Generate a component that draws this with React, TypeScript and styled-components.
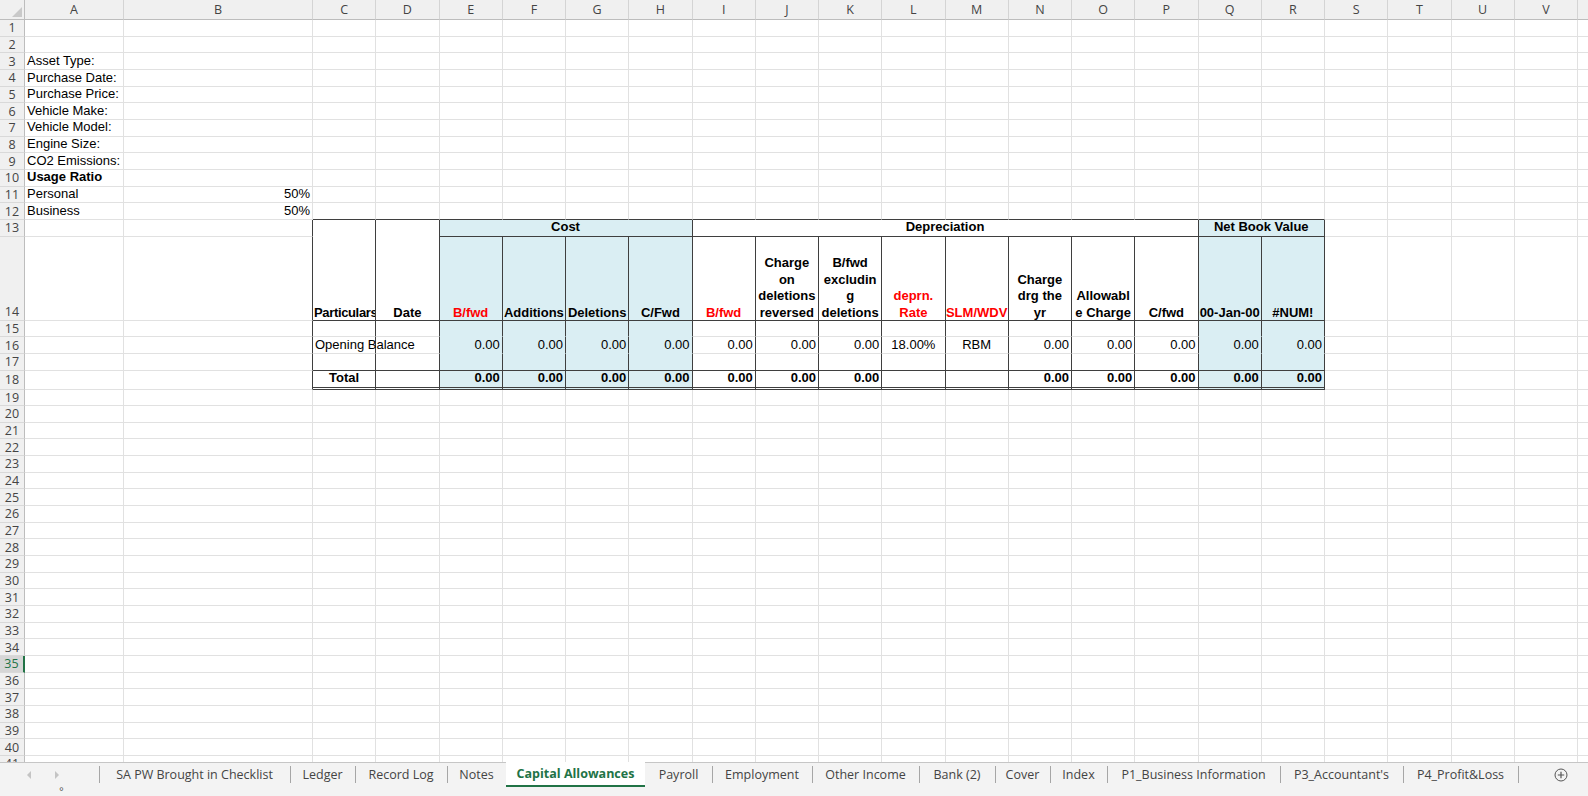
import * as React from "react";
import styled, { createGlobalStyle, css } from "styled-components";

const GlobalStyle = createGlobalStyle`
  html, body {
    margin: 0;
    padding: 0;
    background: #ffffff;
    overflow: hidden;
  }
  #root {
    width: 1588px;
    height: 796px;
  }
`;

type Edge = "grid" | "dark" | "double" | "none";
type Align = "left" | "center" | "right";

interface CellDef {
  text?: React.ReactNode;
  colSpan?: number;
  rowSpan?: number;
  bold?: boolean;
  red?: boolean;
  align?: Align;
  bottomAlign?: boolean;
  fill?: boolean;
  clip?: boolean;
  tight?: boolean;
  right?: Edge;
  bottom?: Edge;
}

const LETTERS = "ABCDEFGHIJKLMNOPQRSTUV".split("").concat([""]);
const ROWS = 41;
const SELECTED_ROW = 35;

// table occupies columns C..R (index 2..17), rows 13..18
const T_FIRST = 2;
const T_LAST = 17;
const FILL_COLS = [4, 5, 6, 7, 16, 17];

const rowHeight = (r: number) => (r === 14 ? 84 : r === 18 ? 19 : 16.67);

const br = (...lines: string[]) =>
  lines.map((l, i) => (
    <React.Fragment key={i}>
      {i > 0 && <br />}
      {l}
    </React.Fragment>
  ));

const labels: Record<number, string> = {
  3: "Asset Type:",
  4: "Purchase Date:",
  5: "Purchase Price:",
  6: "Vehicle Make:",
  7: "Vehicle Model:",
  8: "Engine Size:",
  9: "CO2 Emissions:",
  10: "Usage Ratio",
  11: "Personal",
  12: "Business",
};

const headings: CellDef[] = [
  { text: "B/fwd", red: true },
  { text: "Additions" },
  { text: "Deletions" },
  { text: "C/Fwd" },
  { text: "B/fwd", red: true },
  { text: br("Charge", "on", "deletions", "reversed") },
  { text: br("B/fwd", "excludin", "g", "deletions") },
  { text: br("deprn.", "Rate"), red: true },
  { text: "SLM/WDV", red: true },
  { text: br("Charge", "drg the", "yr") },
  { text: br("Allowabl", "e Charge") },
  { text: "C/fwd" },
  { text: "00-Jan-00" },
  { text: "#NUM!" },
];

const inTable = (c: number) => c >= T_FIRST && c <= T_LAST;

function defaultEdges(r: number, c: number): { right: Edge; bottom: Edge; fill: boolean } {
  const fill = r >= 13 && r <= 18 && FILL_COLS.includes(c);
  let right: Edge = fill ? "none" : "grid";
  let bottom: Edge = fill ? "none" : "grid";
  if (r >= 13 && r <= 18 && c >= 1 && c <= T_LAST) right = "dark";
  if (inTable(c)) {
    if (r === 12 || r === 13 || r === 14 || r === 17) bottom = "dark";
    if (r === 18) bottom = "double";
  }
  return { right, bottom, fill };
}

function cellAt(r: number, c: number): CellDef | null {
  const def: CellDef = { ...defaultEdges(r, c) };

  if (r === 13) {
    if (c === 2)
      return { ...def, rowSpan: 2, text: "Particulars", bold: true, align: "left", bottomAlign: true, clip: true, tight: true, bottom: "dark" };
    if (c === 3) return { ...def, rowSpan: 2, text: "Date", bold: true, align: "center", bottomAlign: true, bottom: "dark" };
    if (c === 4) return { ...def, colSpan: 4, text: "Cost", bold: true, align: "center" };
    if (c === 8) return { ...def, colSpan: 8, text: "Depreciation", bold: true, align: "center" };
    if (c === 16) return { ...def, colSpan: 2, text: "Net Book Value", bold: true, align: "center" };
    if (c > 4 && c < 18) return null;
  }
  if (r === 14) {
    if (c === 2 || c === 3) return null;
    if (c >= 4 && c <= 17)
      return { ...def, ...headings[c - 4], bold: true, align: "center", bottomAlign: true, clip: true };
  }
  if (r === 16 && inTable(c)) {
    if (c === 2) return { ...def, text: "Opening Balance", align: "left" };
    if (c === 11) return { ...def, text: "18.00%", align: "center" };
    if (c === 12) return { ...def, text: "RBM", align: "center" };
    if (c >= 4) return { ...def, text: "0.00", align: "right" };
  }
  if (r === 18 && inTable(c)) {
    if (c === 2) return { ...def, text: "Total", bold: true, align: "center" };
    if (c >= 4 && c !== 11 && c !== 12) return { ...def, text: "0.00", bold: true, align: "right" };
  }
  if (c === 0 && labels[r]) return { ...def, text: labels[r], bold: r === 10, align: "left" };
  if (c === 1 && (r === 11 || r === 12)) return { ...def, text: "50%", align: "right" };
  return def;
}

const edge = (e: Edge | undefined) => {
  switch (e) {
    case "dark":
      return "1px solid #3f3f3f";
    case "double":
      return "3px double #3f3f3f";
    case "none":
      return "1px solid transparent";
    default:
      return "1px solid #e1e1e1";
  }
};

const tabs = [
  { name: "SA PW Brought in Checklist", w: 191 },
  { name: "Ledger", w: 65 },
  { name: "Record Log", w: 92 },
  { name: "Notes", w: 59 },
  { name: "Capital Allowances", w: 139, active: true },
  { name: "Payroll", w: 67 },
  { name: "Employment", w: 100 },
  { name: "Other Income", w: 107 },
  { name: "Bank (2)", w: 76 },
  { name: "Cover", w: 55 },
  { name: "Index", w: 57 },
  { name: "P1_Business Information", w: 173 },
  { name: "P3_Accountant's", w: 123 },
  { name: "P4_Profit&Loss", w: 115 },
];

export default function App() {
  const rowTemplate = ["20px"];
  for (let r = 1; r <= ROWS; r++) rowTemplate.push(`${rowHeight(r)}px`);

  const cells: React.ReactNode[] = [];
  for (let r = 1; r <= ROWS; r++) {
    const rowStart = r + 1;
    cells.push(
      <RowHead
        key={`h${r}`}
        style={{ gridRow: rowStart }}
        $selected={r === SELECTED_ROW}
        $bottom={r === 14}
      >
        {r}
      </RowHead>
    );
    for (let c = 0; c < LETTERS.length; c++) {
      const def = cellAt(r, c);
      if (!def) continue;
      cells.push(
        <Cell
          key={`${r}-${c}`}
          style={{
            gridRow: `${rowStart} / span ${def.rowSpan ?? 1}`,
            gridColumn: `${c + 2} / span ${def.colSpan ?? 1}`,
          }}
          $right={def.right}
          $bottom={def.bottom}
          $fill={def.fill}
          $bold={def.bold}
          $red={def.red}
          $align={def.align}
          $bottomAlign={def.bottomAlign}
          $clip={def.clip}
          $tight={def.tight}
        >
          {def.text && (
            <CellText $align={def.align} $bottomAlign={def.bottomAlign}>
              {def.text}
            </CellText>
          )}
        </Cell>
      );
    }
  }

  return (
    <>
      <GlobalStyle />
      <Window>
        <Sheet style={{ gridTemplateRows: rowTemplate.join(" ") }}>
          <Corner>
            <svg width="10" height="10" viewBox="0 0 10 10">
              <polygon points="10,0 10,10 0,10" fill="#c9c9c9" />
            </svg>
          </Corner>
          {LETTERS.map((l, i) => (
            <ColHead key={i} style={{ gridColumn: i + 2 }}>
              {l}
            </ColHead>
          ))}
          {cells}
        </Sheet>
        <TabBar>
          <Nav>
            <svg width="6" height="8" viewBox="0 0 6 8">
              <polygon points="5,0 5,8 1,4" fill="#c4c4c4" />
            </svg>
            <svg width="6" height="8" viewBox="0 0 6 8">
              <polygon points="1,0 1,8 5,4" fill="#c4c4c4" />
            </svg>
          </Nav>
          {tabs.map((t, i) => (
            <Tab
              key={t.name}
              $w={t.w}
              $active={t.active}
              $sep={!t.active && !tabs[i - 1]?.active}
            >
              {t.name}
            </Tab>
          ))}
          <Sep />
          <AddSheet>
            <svg width="14" height="14" viewBox="0 0 14 14">
              <circle cx="7" cy="7" r="6" fill="none" stroke="#555" strokeWidth="1" />
              <path d="M7 3.8v6.4M3.8 7h6.4" stroke="#555" strokeWidth="1.2" />
            </svg>
          </AddSheet>
        </TabBar>
        <StatusBar>
          <StatusGlyph>°</StatusGlyph>
        </StatusBar>
      </Window>
    </>
  );
}

const Window = styled.div`
  display: flex;
  flex-direction: column;
  width: 1588px;
  height: 796px;
  overflow: hidden;
  background: #ffffff;
`;

const Sheet = styled.div`
  flex: 1;
  min-height: 0;
  display: grid;
  grid-template-columns: 25px 99px 189px repeat(20, 63.25px) 63px;
  overflow: hidden;
  font-family: "Liberation Sans", Arial, sans-serif;
  font-size: 13px;
  color: #000000;
`;

const Corner = styled.div`
  grid-row: 1;
  grid-column: 1;
  background: #f0f0f0;
  border-right: 1px solid #bdbdbd;
  border-bottom: 1px solid #bdbdbd;
  display: flex;
  align-items: flex-end;
  justify-content: flex-end;
  padding: 0 2px 2px 0;
  box-sizing: border-box;
`;

const ColHead = styled.div`
  grid-row: 1;
  background: #f0f0f0;
  border-right: 1px solid #d4d4d4;
  border-bottom: 1px solid #bdbdbd;
  box-sizing: border-box;
  display: flex;
  align-items: center;
  justify-content: center;
  font-family: "Open Sans", "Liberation Sans", sans-serif;
  font-size: 12.5px;
  color: #444444;
`;

const RowHead = styled.div<{ $selected?: boolean; $bottom?: boolean }>`
  grid-column: 1;
  background: ${(p) => (p.$selected ? "#d6d6d6" : "#f0f0f0")};
  border-bottom: 1px solid #d9d9d9;
  border-right: ${(p) => (p.$selected ? "2px solid #217346" : "1px solid #bdbdbd")};
  box-sizing: border-box;
  display: flex;
  align-items: ${(p) => (p.$bottom ? "flex-end" : "center")};
  justify-content: center;
  padding-bottom: ${(p) => (p.$bottom ? "1px" : "0")};
  font-family: "Open Sans", "Liberation Sans", sans-serif;
  font-size: 12.5px;
  line-height: 15px;
  color: ${(p) => (p.$selected ? "#217346" : "#444444")};
`;

const Cell = styled.div<{
  $right?: Edge;
  $bottom?: Edge;
  $fill?: boolean;
  $bold?: boolean;
  $red?: boolean;
  $align?: Align;
  $bottomAlign?: boolean;
  $clip?: boolean;
  $tight?: boolean;
}>`
  box-sizing: border-box;
  min-width: 0;
  display: flex;
  align-items: ${(p) => (p.$bottomAlign ? "flex-end" : "center")};
  justify-content: ${(p) =>
    p.$align === "right" ? "flex-end" : p.$align === "center" ? "center" : "flex-start"};
  padding: ${(p) => (p.$tight ? "0 0 0 1px" : "0 2px")};
  letter-spacing: ${(p) => (p.$tight ? "-0.35px" : "normal")};
  border-right: ${(p) => edge(p.$right)};
  border-bottom: ${(p) => edge(p.$bottom)};
  background: ${(p) => (p.$fill ? "#daeef3" : "transparent")};
  font-weight: ${(p) => (p.$bold ? 700 : 400)};
  color: ${(p) => (p.$red ? "#ff0000" : "#000000")};
  white-space: nowrap;
  line-height: 16.6px;
  overflow: ${(p) => (p.$clip ? "hidden" : "visible")};
`;

const CellText = styled.span<{ $align?: Align; $bottomAlign?: boolean }>`
  display: block;
  text-align: ${(p) => p.$align ?? "left"};
  ${(p) =>
    p.$bottomAlign &&
    css`
      position: relative;
      top: 2px;
    `}
`;

const TabBar = styled.div`
  height: 25px;
  flex: none;
  display: flex;
  align-items: stretch;
  background: #f3f3f3;
  border-top: 1px solid #c6c6c6;
  box-sizing: border-box;
  font-family: "Open Sans", "Liberation Sans", sans-serif;
  font-size: 12.5px;
  color: #444444;
`;

const Nav = styled.div`
  width: 99px;
  flex: none;
  display: flex;
  align-items: center;
  gap: 22px;
  padding-left: 26px;
  box-sizing: border-box;
`;

const Tab = styled.div<{ $w: number; $active?: boolean; $sep?: boolean }>`
  width: ${(p) => p.$w}px;
  flex: none;
  position: relative;
  display: flex;
  align-items: center;
  justify-content: center;
  box-sizing: border-box;
  padding-bottom: 1px;
  ${(p) =>
    p.$active &&
    css`
      background: #ffffff;
      color: #217346;
      font-weight: 700;
      border-bottom: 2px solid #217346;
      padding-bottom: 0;
      margin-top: -1px;
    `}
  ${(p) =>
    p.$sep &&
    css`
      &::before {
        content: "";
        position: absolute;
        left: 0;
        top: 3px;
        bottom: 4px;
        width: 1px;
        background: #a6a6a6;
      }
    `}
`;

const Sep = styled.div`
  width: 1px;
  margin: 3px 0 4px;
  background: #a6a6a6;
  flex: none;
`;

const AddSheet = styled.div`
  flex: none;
  width: 30px;
  margin-left: 27px;
  display: flex;
  align-items: center;
  justify-content: center;
`;

const StatusBar = styled.div`
  height: 9px;
  flex: none;
  background: #f3f3f3;
  overflow: hidden;
  position: relative;
`;

const StatusGlyph = styled.span`
  position: absolute;
  left: 59px;
  top: -2px;
  font-family: "Liberation Sans", sans-serif;
  font-size: 12px;
  color: #555555;
`;
